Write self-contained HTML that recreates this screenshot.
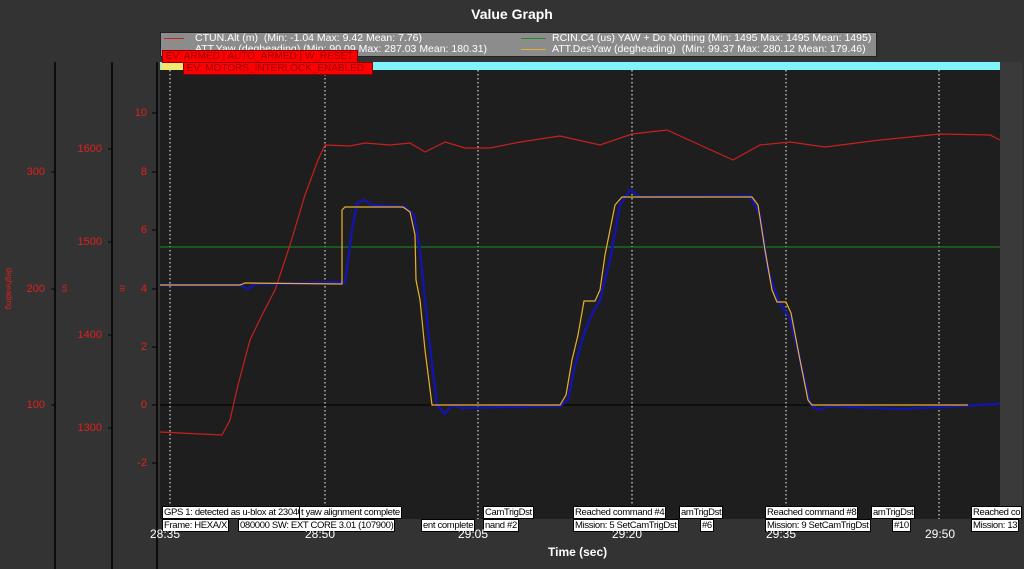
<!DOCTYPE html><html><head><style>
body{margin:0;width:1024px;height:569px;background:#333333;overflow:hidden;font-family:"Liberation Sans",sans-serif;position:relative}
.a{position:absolute;white-space:nowrap}
.r{color:#e02020;font-size:11px}
.box{position:absolute;background:#fff;color:#000;font-size:9.5px;letter-spacing:-0.35px;line-height:11px;border:1px solid #000;padding:0 1px;white-space:nowrap;font-family:"Liberation Sans",sans-serif}
</style></head><body>
<div class="a" style="left:0;top:6px;width:1024px;text-align:center;color:#fff;font-weight:bold;font-size:14px">Value Graph</div>
<svg width="1024" height="569" style="position:absolute;left:0;top:0">
<rect x="160" y="62" width="840" height="457" fill="#1e1e1e"/>
<rect x="1000" y="62" width="22" height="457" fill="#3a3a3a"/>
<rect x="160" y="62" width="840" height="8" fill="#7ff5fb"/>
<rect x="161" y="63" width="22" height="7" fill="#f0e870"/>
<g stroke="#000" stroke-width="1.5"><line x1="55" y1="62" x2="55" y2="569"/><line x1="112" y1="62" x2="112" y2="569"/><line x1="157" y1="62" x2="157" y2="569"/></g>
<g stroke="#000"><line x1="51" y1="172" x2="55" y2="172"/><line x1="51" y1="289" x2="55" y2="289"/><line x1="51" y1="405" x2="55" y2="405"/>
<line x1="108" y1="149" x2="112" y2="149"/><line x1="108" y1="242" x2="112" y2="242"/><line x1="108" y1="335" x2="112" y2="335"/><line x1="108" y1="428" x2="112" y2="428"/>
<line x1="152" y1="113" x2="157" y2="113"/><line x1="152" y1="172" x2="157" y2="172"/><line x1="152" y1="230" x2="157" y2="230"/><line x1="152" y1="289" x2="157" y2="289"/><line x1="152" y1="347" x2="157" y2="347"/><line x1="152" y1="405" x2="157" y2="405"/><line x1="152" y1="463" x2="157" y2="463"/></g>
<g stroke="#fff" stroke-dasharray="1.5,2.5" stroke-width="1"><line x1="170" y1="70" x2="170" y2="519"/><line x1="325" y1="70" x2="325" y2="519"/><line x1="478" y1="70" x2="478" y2="519"/><line x1="632" y1="70" x2="632" y2="519"/><line x1="786" y1="70" x2="786" y2="519"/><line x1="939" y1="70" x2="939" y2="519"/></g>
<line x1="160" y1="405" x2="1000" y2="405" stroke="#000"/>
<line x1="160" y1="247" x2="1000" y2="247" stroke="#1f8a1f"/>
<polyline fill="none" stroke="#c82020" stroke-width="1.2" points="160,432 200,434 222,435 230,420 238,385 250,340 262,315 275,290 290,245 305,195 318,160 325,145 350,146 365,143 390,145 410,143 425,152 445,142 465,148 490,148 520,142 560,136 600,145 632,134 667,130 700,145 733,160 760,145 790,142 825,147 880,140 940,134 990,135 1000,140"/>
<polyline fill="none" stroke="#1414a8" stroke-width="2.5" points="160,285 240,285 248,289 255,284 340,282 345,283 352,230 357,203 364,200 372,205 405,207 414,215 420,250 428,330 437,405 445,414 452,405 462,408 560,406 568,400 574,370 582,340 590,318 600,300 610,260 620,205 630,190 640,197 750,196 760,215 768,270 780,304 790,318 800,360 810,404 818,410 830,406 900,409 1000,404"/>
<polyline fill="none" stroke="#e8b030" stroke-width="1.2" points="160,285 240,285 245,283 342,284 342,210 345,207 403,207 410,212 415,235 416,280 420,300 425,350 432,405 560,405 566,395 572,360 578,335 584,301 595,301 600,290 605,255 615,205 622,197 752,197 758,205 765,250 772,290 777,302 786,302 791,313 800,360 808,400 812,405 968,405"/>
</svg>
<div class="a r" style="left:10px;top:166px;width:35px;text-align:right">300</div>
<div class="a r" style="left:10px;top:283px;width:35px;text-align:right">200</div>
<div class="a r" style="left:10px;top:399px;width:35px;text-align:right">100</div>
<div class="a r" style="left:60px;top:143px;width:42px;text-align:right">1600</div>
<div class="a r" style="left:60px;top:236px;width:42px;text-align:right">1500</div>
<div class="a r" style="left:60px;top:329px;width:42px;text-align:right">1400</div>
<div class="a r" style="left:60px;top:422px;width:42px;text-align:right">1300</div>
<div class="a r" style="left:120px;top:107px;width:27px;text-align:right">10</div>
<div class="a r" style="left:120px;top:166px;width:27px;text-align:right">8</div>
<div class="a r" style="left:120px;top:224px;width:27px;text-align:right">6</div>
<div class="a r" style="left:120px;top:283px;width:27px;text-align:right">4</div>
<div class="a r" style="left:120px;top:341px;width:27px;text-align:right">2</div>
<div class="a r" style="left:120px;top:399px;width:27px;text-align:right">0</div>
<div class="a r" style="left:120px;top:457px;width:27px;text-align:right">-2</div>
<div class="a r" style="left:-12px;top:284px;font-size:8px;transform:rotate(90deg)">degheading</div>
<div class="a r" style="left:61px;top:284px;font-size:8px;transform:rotate(90deg)">us</div>
<div class="a r" style="left:119px;top:284px;font-size:8px;transform:rotate(90deg)">m</div>
<div class="a" style="left:160px;top:32px;width:715px;height:23px;background:#8c8c8c;border:1px solid #222;color:#fff;font-size:10.5px;line-height:11px">
<div class="a" style="left:3px;top:5px;width:20px;height:1px;background:#c82020"></div>
<div class="a" style="left:34px;top:0">CTUN.Alt (m)&nbsp; (Min: -1.04 Max: 9.42 Mean: 7.76)</div>
<div class="a" style="left:34px;top:11px">ATT.Yaw (degheading) (Min: 90.09 Max: 287.03 Mean: 180.31)</div>
<div class="a" style="left:360px;top:5px;width:25px;height:1px;background:#1f8a1f"></div>
<div class="a" style="left:360px;top:16px;width:25px;height:1px;background:#e8b030"></div>
<div class="a" style="left:391px;top:0">RCIN.C4 (us) YAW + Do Nothing (Min: 1495 Max: 1495 Mean: 1495)</div>
<div class="a" style="left:391px;top:11px">ATT.DesYaw (degheading)&nbsp; (Min: 99.37 Max: 280.12 Mean: 179.46)</div>
</div>
<div class="a" style="left:162px;top:50px;width:194px;height:11px;background:#f00;border:1px solid #800;color:#900;font-size:10px;line-height:11px">&nbsp;EV: ARMED | AUTO_ARMED | W_RESET</div>
<div class="a" style="left:183px;top:62px;width:188px;height:11px;background:#f00;border:1px solid #800;color:#900;font-size:10px;line-height:11px">&nbsp;EV: MOTORS_INTERLOCK_ENABLED</div>
<div class="box" style="left:162px;top:506px">GPS 1: detected as u-blox at 230400 baud</div>
<div class="box" style="left:299px;top:506px">t yaw alignment complete</div>
<div class="box" style="left:483px;top:506px">CamTrigDst</div>
<div class="box" style="left:573px;top:506px">Reached command #4</div>
<div class="box" style="left:679px;top:506px">amTrigDst</div>
<div class="box" style="left:765px;top:506px">Reached command #8</div>
<div class="box" style="left:871px;top:506px">amTrigDst</div>
<div class="box" style="left:971px;top:506px">Reached co</div>
<div class="box" style="left:162px;top:519px">Frame: HEXA/X</div>
<div class="box" style="left:238px;top:519px">080000 SW: EXT CORE 3.01 (107900)</div>
<div class="box" style="left:421px;top:519px">ent complete</div>
<div class="box" style="left:483px;top:519px">nand #2</div>
<div class="box" style="left:573px;top:519px">Mission: 5 SetCamTrigDst</div>
<div class="box" style="left:700px;top:519px">#6</div>
<div class="box" style="left:765px;top:519px">Mission: 9 SetCamTrigDst</div>
<div class="box" style="left:892px;top:519px">#10</div>
<div class="box" style="left:971px;top:519px">Mission: 13</div>
<div class="a" style="left:150px;top:527px;color:#fff;font-size:12px">28:35</div>
<div class="a" style="left:305px;top:527px;color:#fff;font-size:12px">28:50</div>
<div class="a" style="left:458px;top:527px;color:#fff;font-size:12px">29:05</div>
<div class="a" style="left:612px;top:527px;color:#fff;font-size:12px">29:20</div>
<div class="a" style="left:766px;top:527px;color:#fff;font-size:12px">29:35</div>
<div class="a" style="left:925px;top:527px;color:#fff;font-size:12px">29:50</div>
<div class="a" style="left:548px;top:545px;color:#fff;font-size:12px;font-weight:bold">Time (sec)</div>
</body></html>
